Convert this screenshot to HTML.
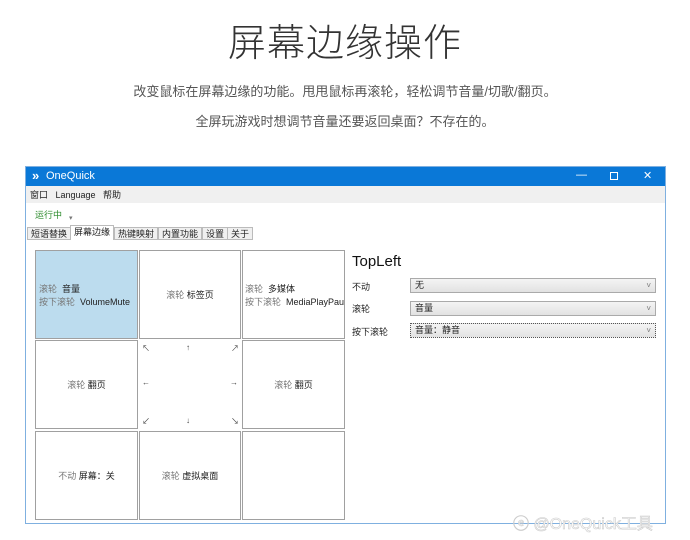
<!DOCTYPE html>
<html><head><meta charset="utf-8"><style>
*{margin:0;padding:0;box-sizing:border-box}
body{width:690px;height:540px;background:#fff;font-family:"Liberation Sans","Noto Sans CJK SC",sans-serif;position:relative;overflow:hidden;color:#333}
.abs{position:absolute}
h1{position:absolute;left:0;width:690px;top:12px;text-align:center;font-weight:300;font-size:38px;color:#333;font-family:"Noto Sans CJK SC",sans-serif;letter-spacing:1px}
.sub{position:absolute;left:0;width:690px;text-align:center;font-size:13px;color:#555}
.win{left:25px;top:166px;width:641px;height:358px;border:1px solid #7fb0e0;background:#fff}
.title{left:0;top:0;width:100%;height:19px;background:#0a78d7;color:#fff;font-size:11px}
.menu{left:0;top:19px;width:100%;height:17px;background:#f0f0f0;font-size:9px;color:#222}
.tab{position:absolute;top:60px;height:13px;font-size:9px;border:1px solid #bbb;background:#f0f0f0;padding:0 3px;line-height:12px;color:#222}
.cell{position:absolute;border:1px solid #a0a0a0;background:#fff;font-size:9px;color:#777;display:flex;align-items:center;justify-content:center;text-align:center;white-space:nowrap;overflow:hidden}
.cell b{font-weight:normal;color:#222}
.lbl{position:absolute;font-size:9px;color:#222}
.sel{position:absolute;left:384px;width:246px;height:15px;border:1px solid #aaa;background:linear-gradient(#f4f4f4,#e2e2e2);font-size:9px;padding-left:4px;line-height:13px;color:#222}
.sel:after{content:"˅";position:absolute;right:4px;top:0;color:#777;font-size:8px}
.ar{position:absolute;font-size:8px;color:#444}
</style></head><body>
<h1>屏幕边缘操作</h1>
<div class="sub" style="top:81px">改变鼠标在屏幕边缘的功能。甩甩鼠标再滚轮，轻松调节音量/切歌/翻页。</div>
<div class="sub" style="top:111px">全屏玩游戏时想调节音量还要返回桌面？不存在的。</div>
<div class="abs win">
 <div class="abs title"><span style="position:absolute;left:6px;top:1px;font-weight:bold;font-size:13px">»</span><span style="position:absolute;left:20px;top:3px">OneQuick</span>
 <span style="position:absolute;left:550px;top:2px">—</span><span style="position:absolute;left:584px;top:5px;width:8px;height:8px;border:1px solid #fff"></span><span style="position:absolute;left:617px;top:2px;font-size:11px">✕</span></div>
 <div class="abs menu"><span style="position:absolute;left:4px;top:2px">窗口&nbsp;&nbsp; Language&nbsp;&nbsp; 帮助</span></div>
 <div class="abs" style="left:9px;top:41px;font-size:9px;color:#2a8a2a">运行中</div>
 <div class="abs" style="left:43px;top:47px;font-size:7px;color:#777">▾</div>
 <div class="tab" style="left:1px">短语替换</div>
 <div class="tab" style="left:44px;top:58px;height:15px;background:#fff;border-bottom:none">屏幕边缘</div>
 <div class="tab" style="left:88px">热键映射</div>
 <div class="tab" style="left:132px">内置功能</div>
 <div class="tab" style="left:176px">设置</div>
 <div class="tab" style="left:201px">关于</div>
 <div class="cell" style="left:9px;top:83px;width:103px;height:89px;background:#bcdcee;justify-content:flex-start;text-align:left;padding-left:3px"><div>滚轮 <b>&nbsp;音量</b><br>按下滚轮 <b>&nbsp;VolumeMute</b></div></div>
 <div class="cell" style="left:113px;top:83px;width:102px;height:89px">滚轮 <b>&nbsp;标签页</b></div>
 <div class="cell" style="left:216px;top:83px;width:103px;height:89px;justify-content:flex-start;text-align:left;padding-left:2px"><div>滚轮 <b>&nbsp;多媒体</b><br>按下滚轮 <b>&nbsp;MediaPlayPause</b></div></div>
 <div class="cell" style="left:9px;top:173px;width:103px;height:89px">滚轮 <b>&nbsp;翻页</b></div>
 <div class="ar" style="left:116px;top:176px">↖</div><div class="ar" style="left:160px;top:176px">↑</div><div class="ar" style="left:205px;top:176px">↗</div>
 <div class="ar" style="left:116px;top:211px">←</div><div class="ar" style="left:204px;top:211px">→</div>
 <div class="ar" style="left:116px;top:249px">↙</div><div class="ar" style="left:160px;top:249px">↓</div><div class="ar" style="left:205px;top:249px">↘</div>
 <div class="cell" style="left:216px;top:173px;width:103px;height:89px">滚轮 <b>&nbsp;翻页</b></div>
 <div class="cell" style="left:9px;top:264px;width:103px;height:89px">不动 <b>&nbsp;屏幕：关</b></div>
 <div class="cell" style="left:113px;top:264px;width:102px;height:89px">滚轮 <b>&nbsp;虚拟桌面</b></div>
 <div class="cell" style="left:216px;top:264px;width:103px;height:89px"></div>
 <div class="abs" style="left:326px;top:86px;font-size:15px;color:#111">TopLeft</div>
 <div class="lbl" style="left:326px;top:113px">不动</div><div class="sel" style="top:111px">无</div>
 <div class="lbl" style="left:326px;top:135px">滚轮</div><div class="sel" style="top:134px">音量</div>
 <div class="lbl" style="left:326px;top:158px">按下滚轮</div><div class="sel" style="top:156px;border:1px dotted #555">音量：静音</div>
</div>
<div class="abs" style="left:513px;top:510px;font-size:16px;color:#fff;-webkit-text-stroke:0.6px #ccc;font-family:'Liberation Sans','Noto Sans CJK SC',sans-serif">ⓔ @OneQuick工具</div>
</body></html>
